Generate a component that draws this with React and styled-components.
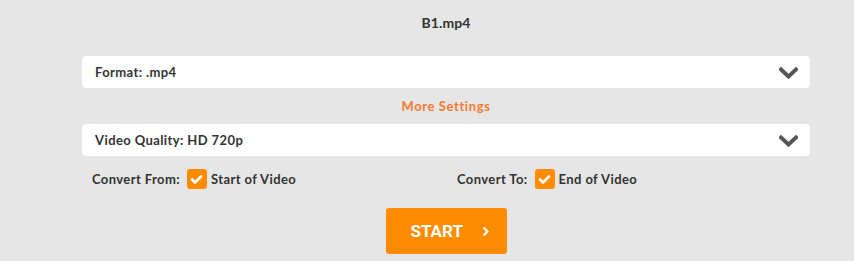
import React from "react";
import styled, { createGlobalStyle } from "styled-components";

const Global = createGlobalStyle`
  html, body { margin: 0; padding: 0; background: #e6e6e6; }
  body { font-family: "Lato", "Open Sans", sans-serif; color: #333; }
`;

const Page = styled.div`
  width: 854px;
  height: 261px;
  background: #e6e6e6;
  padding-left: 82px;
  box-sizing: border-box;
  overflow: hidden;
`;

const Panel = styled.div`
  width: 728px;
  display: flex;
  flex-direction: column;
  align-items: stretch;
  letter-spacing: 0.4px;
`;

const Title = styled.div`
  text-align: center;
  font-size: 14px;
  font-weight: 700;
  color: #333;
  line-height: 18px;
  margin-top: 14px;
  height: 18px;
  letter-spacing: 0.1px;
`;

const Select = styled.div`
  height: 32px;
  background: #fff;
  border-radius: 4px;
  display: flex;
  align-items: center;
  justify-content: space-between;
  padding: 0 12px 0 13px;
  margin-top: ${(p) => p.$top}px;
  font-size: 13px;
  font-weight: 700;
  color: #333;
`;

const MoreLink = styled.div`
  text-align: center;
  color: #f47a30;
  font-size: 13px;
  font-weight: 700;
  line-height: 18px;
  margin-top: 9px;
  letter-spacing: 0.6px;
`;

const OptionsRow = styled.div`
  display: grid;
  grid-template-columns: 364px 364px;
  margin-top: 12px;
  height: 22px;
`;

const Option = styled.div`
  display: flex;
  align-items: center;
  padding-left: ${(p) => p.$pad}px;
  font-size: 13px;
  font-weight: 700;
  color: #333;
  gap: 7px;
`;

const Check = styled.span`
  width: 20px;
  height: 20px;
  border-radius: 3px;
  background: #ff8c00;
  display: inline-flex;
  align-items: center;
  justify-content: center;
`;

const ValueText = styled.span`
  margin-left: -3px;
`;

const ButtonWrap = styled.div`
  display: flex;
  justify-content: center;
  margin-top: 18px;
`;

const StartButton = styled.button`
  width: 121px;
  height: 46px;
  border: 0;
  border-radius: 3px;
  background: #ff8c00;
  color: #fff;
  font-family: "Roboto", sans-serif;
  font-weight: 700;
  font-size: 17px;
  letter-spacing: 0;
  display: flex;
  align-items: center;
  padding: 0 0 0 25px;
  gap: 19px;
  cursor: pointer;
`;

const Chevron = () => (
  <svg width="19" height="13" viewBox="0 0 19 13">
    <path d="M2 3.5 L9.5 10.5 L17 3.5" fill="none" stroke="#555" strokeWidth="4" strokeLinecap="square" />
  </svg>
);

const Tick = () => (
  <svg width="13" height="11" viewBox="0 0 13 11">
    <path d="M2 5.5 L5 8.5 L11 2.5" fill="none" stroke="#fff" strokeWidth="2.6" strokeLinecap="round" strokeLinejoin="round" />
  </svg>
);

const SmallArrow = () => (
  <svg width="7" height="11" viewBox="0 0 7 11">
    <path d="M1.5 1.5 L5.5 5.5 L1.5 9.5" fill="none" stroke="#fff" strokeWidth="2" />
  </svg>
);

export default function App() {
  return (
    <>
      <Global />
      <Page>
        <Panel>
          <Title>B1.mp4</Title>
          <Select $top={24}>
            <span>Format: .mp4</span>
            <Chevron />
          </Select>
          <MoreLink>More Settings</MoreLink>
          <Select $top={9}>
            <span>Video Quality: HD 720p</span>
            <Chevron />
          </Select>
          <OptionsRow>
            <Option $pad={10}>
              <span>Convert From:</span>
              <Check><Tick /></Check>
              <ValueText>Start of Video</ValueText>
            </Option>
            <Option $pad={11}>
              <span>Convert To:</span>
              <Check><Tick /></Check>
              <ValueText>End of Video</ValueText>
            </Option>
          </OptionsRow>
          <ButtonWrap>
            <StartButton>
              <span>START</span>
              <SmallArrow />
            </StartButton>
          </ButtonWrap>
        </Panel>
      </Page>
    </>
  );
}
